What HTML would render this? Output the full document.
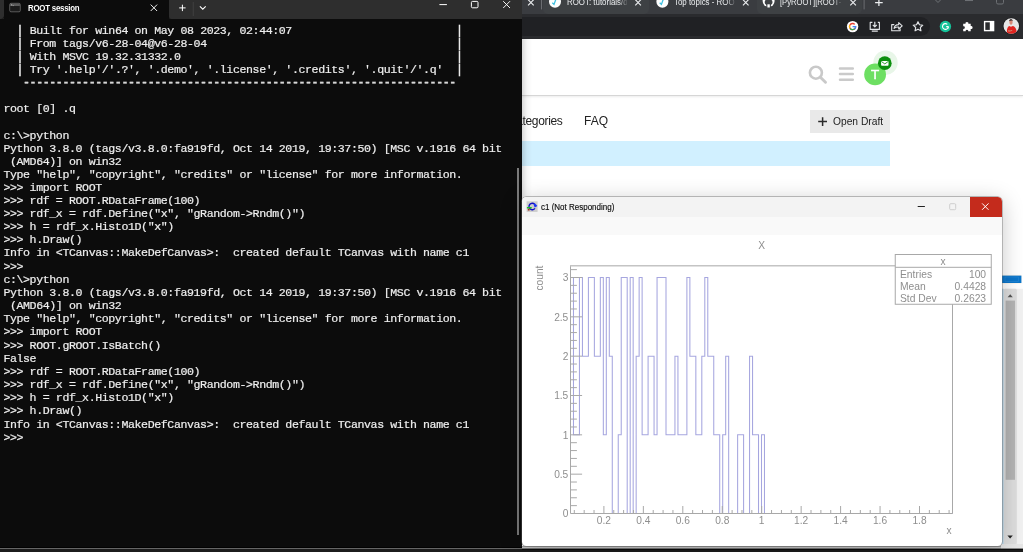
<!DOCTYPE html>
<html lang="en"><head><meta charset="utf-8"><title>ROOT session</title>
<style>
html,body{margin:0;padding:0;}
body{width:1023px;height:552px;overflow:hidden;position:relative;background:#fff;font-family:"Liberation Sans",Arial,sans-serif;}
.abs{position:absolute;}
body>*{will-change:transform;}
/* ---------- terminal ---------- */
#term{position:absolute;left:0;top:0;width:521.6px;height:552px;background:#0c0c0c;overflow:hidden;}
#term .tbar{position:absolute;left:0;top:0;width:522px;height:18.5px;background:#2e2e2e;}
#term .tab{position:absolute;left:3.75px;top:-4px;width:164.75px;height:23px;background:#0c0c0c;border-radius:4px 4px 0 0;}
#term .ttl{position:absolute;left:28px;top:2.5px;font-size:8.6px;font-weight:bold;color:#fff;letter-spacing:-0.25px;white-space:nowrap;transform:scaleX(0.915);transform-origin:0 0;}
#term .lines{position:absolute;left:0;top:0;width:522px;height:552px;will-change:transform;}
#term .lines div{position:absolute;left:3.4px;margin:0;font-family:"Liberation Mono","DejaVu Sans Mono",monospace;font-size:11.6px;letter-spacing:-0.4px;line-height:13px;height:13px;color:#efefef;white-space:pre;-webkit-text-stroke:0.2px #efefef;}
#term .sb{position:absolute;left:516.9px;top:167.7px;width:2.2px;height:367.2px;background:#7a7a7a;}
/* ---------- chrome ---------- */
#chrome{position:absolute;left:522px;top:0;width:501px;height:552px;background:#fff;overflow:hidden;}
#chrome .strip{position:absolute;left:0;top:0;width:501px;height:14px;background:#3a3c40;}
#chrome .tool{position:absolute;left:0;top:13.5px;width:501px;height:25px;background:#2a2b2e;}
#chrome .omni{position:absolute;left:-20px;top:16.5px;width:428px;height:19.2px;background:#202124;border-radius:0 9.6px 9.6px 0;}
.tabtxt{position:absolute;top:-2.7px;height:11px;font-size:8.4px;line-height:normal;color:#eceef0;white-space:nowrap;overflow:hidden;-webkit-mask-image:linear-gradient(90deg,#000 86%,transparent 102%);mask-image:linear-gradient(90deg,#000 86%,transparent 102%);}
.tabtxt span{display:inline-block;transform-origin:0 0;}
/* page */
#hdr{position:absolute;left:0;top:38.5px;width:501px;height:56.3px;background:#fff;border-bottom:1.5px solid #d6d6d6;box-shadow:0 1px 2px rgba(0,0,0,.08);}
.nav{position:absolute;font-size:12px;color:#222;white-space:nowrap;}
#draft{position:absolute;left:288px;top:110px;width:80px;height:22.85px;background:#e9e9e9;}
#draft span{position:absolute;left:22.7px;top:5.1px;font-size:11px;line-height:13px;color:#222;white-space:nowrap;transform:scaleX(0.931);transform-origin:0 0;}
#bluebar{position:absolute;left:0;top:141px;width:368px;height:24.5px;background:#d1f0ff;}
/* c1 window */
#c1{position:absolute;left:522px;top:197px;width:480px;height:348.5px;background:#fff;border-radius:4.5px;box-shadow:0 0 0 0.7px rgba(100,100,100,.55),0 4px 22px rgba(0,0,0,.23);overflow:hidden;}
#c1 .t{position:absolute;left:0;top:0;width:480px;height:19.6px;background:#f3f3f3;}
#c1 .m{position:absolute;left:0;top:19.6px;width:480px;height:18.3px;background:#f9f9f9;}
#c1 .cl{position:absolute;left:448px;top:0;width:32px;height:19.6px;background:#c42b1c;}
#c1 .ttl{position:absolute;left:18.9px;top:5.1px;font-size:8.4px;line-height:10px;color:#0d0d0d;white-space:nowrap;transform:scaleX(0.955);transform-origin:0 0;-webkit-text-stroke:0.15px #0d0d0d;}
svg.plot{position:absolute;left:0;top:0;}
/* right scrollbar */
#rs{position:absolute;left:1001px;top:270px;width:23px;height:280px;}
#bottom{position:absolute;left:0;top:544px;}
#term .lines div.dash{font-weight:bold;-webkit-text-stroke:0.3px #d8d8d8;color:#d8d8d8;}
#term .lines span.p{display:inline-block;transform:scaleY(1.17);transform-origin:50% 88%;-webkit-text-stroke:0.45px #efefef;}

</style></head>
<body>
<div id="chrome">
  <div class="strip"></div>
  <div class="tool"></div>
  <div class="omni"></div>
  <!-- tabs -->
  <div class="abs" style="left:21px;top:-6px;width:105.600px;height:20px;background:#3e4144;border-radius:0 0 5px 5px;"></div>
  <div class="abs" style="left:234.750px;top:-6px;width:105.600px;height:20px;background:#3e4144;border-radius:0 0 5px 5px;"></div>
  <svg class="abs" style="left:0;top:0" width="501" height="40" viewBox="0 0 501 40">
    <path d="M19.500,0v9.400M342.100,0v9.400" stroke="#707377" stroke-width="0.900" fill="none"/>
    <g stroke="#eceef0" stroke-width="1.150" fill="none">
      <path d="M6.100,-0.300l5.600,5.600m0,-5.600l-5.600,5.600"/>
      <path d="M113.300,-0.300l5.600,5.600m0,-5.600l-5.600,5.600"/>
      <path d="M220.950,-0.300l5.600,5.600m0,-5.600l-5.600,5.600"/>
      <path d="M328.300,-0.300l5.600,5.600m0,-5.600l-5.600,5.600"/>
      <path d="M356.900,-2v8M353.100,2.500h7.600" stroke-width="1.250"/>
    </g>
    <!-- window controls (cut off) -->
    <g stroke="#6d7074" stroke-width="1" fill="none">
      <path d="M413,-0.500l3,3l3,-3"/>
      <path d="M443,0.400h8" stroke-width="1.300"/>
      <rect x="474.500" y="-5" width="7" height="9" rx="1.500"/>
    </g>
    <!-- favicons -->
    <circle cx="33" cy="1.750" r="6" fill="#fff"/>
    <path d="M30.300,2.800l1.700,1.600l2.400,-6.500" stroke="#3fc0e0" stroke-width="1.300" fill="none"/>
    <circle cx="140.400" cy="1.750" r="6" fill="#fff"/>
    <path d="M137.700,2.800l1.700,1.600l2.400,-6.500" stroke="#3fc0e0" stroke-width="1.300" fill="none"/>
    <circle cx="246.600" cy="1" r="6" fill="#fff"/>
    <path d="M244.300,7.500v-2.600c-1.600,-0.700 -2,-2.500 -1.200,-4.300c1.500,-1.800 5.500,-1.800 7,0c0.800,1.800 0.400,3.600 -1.200,4.300v2.600z" fill="#3e4144"/>
    <path d="M245.400,7.500v-3.200h2.400v3.200z" fill="#fff"/>
    <!-- toolbar icons -->
    <circle cx="330.600" cy="26.600" r="5.700" fill="#fff"/>
    <path d="M333.700,26.600a3.100,3.100 0 1 1 -0.900,-2.200" stroke="#ea4335" stroke-width="1.300" fill="none"/>
    <path d="M327.800,25.300a3.100,3.100 0 0 0 0,2.600" stroke="#fbbc05" stroke-width="1.300" fill="none"/>
    <path d="M328.200,28.500a3.100,3.100 0 0 0 4.500,0.300" stroke="#34a853" stroke-width="1.300" fill="none"/>
    <path d="M330.600,26.600h3.100a3.100,3.100 0 0 1 -1,2.300" stroke="#4285f4" stroke-width="1.300" fill="none"/>
    <g stroke="#e3e5e8" stroke-width="1.100" fill="none" stroke-linejoin="round">
      <!-- install -->
      <path d="M350.400,22.400h-2.200v7h9.200v-7h-1.600M349.800,31.100h6"/>
      <path d="M352.800,21.800v4.800M350.800,24.900l2,2l2,-2" stroke-width="1.200"/>
      <!-- share -->
      <path d="M372.300,24.600h-2.600v6.200h8.400v-2.200"/>
      <path d="M372.100,28.300c0.300,-2.300 1.800,-3.600 4.600,-3.700v-2l3.500,3.200l-3.500,3.200v-2c-2,-0.100 -3.500,0.300 -4.600,1.300z"/>
      <!-- star -->
      <path d="M396,21.700l1.450,3.100l3.350,0.400l-2.500,2.300l0.650,3.300l-2.950,-1.650l-2.950,1.650l0.650,-3.300l-2.500,-2.300l3.350,-0.400z" stroke-width="1.150"/>
    </g>
    <!-- grammarly -->
    <circle cx="423.400" cy="26.500" r="5.700" fill="#15c39a"/>
    <path d="M426.300,26.700a2.900,2.900 0 1 1 -1,-2.400M426.500,26.600h-2.300M426.300,26.600v2" stroke="#fff" stroke-width="1.100" fill="none"/>
    <!-- puzzle -->
    <path d="M441.200,23.800h2.300a1.500,1.500 0 1 1 2.900,0h2.300v2.300a1.500,1.500 0 1 1 0,2.900v2.300h-2.500a1.300,1.300 0 1 0 -2.500,0h-2.500v-2.500a1.300,1.300 0 1 0 0,-2.500z" fill="#fff"/>
    <!-- side panel -->
    <rect x="462.600" y="21.600" width="9" height="9" fill="none" stroke="#fff" stroke-width="1.400"/>
    <path d="M467.800,21.600h3.800v9h-3.800z" fill="#fff"/>
    <!-- avatar -->
    <circle cx="489.300" cy="26" r="8.600" fill="#1c1c1f"/>
    <circle cx="489.300" cy="26" r="7.800" fill="#e6e6e6"/>
    <clipPath id="avc"><circle cx="489.300" cy="26" r="7.800"/></clipPath>
    <g clip-path="url(#avc)">
      <path d="M485,35c-0.600,-5.500 0.300,-8.400 2.200,-9.100l1.800,0.900l1.800,-0.900c2.600,0.700 4.300,3.200 3.900,9.100z" fill="#e02420"/>
      <path d="M487.400,21.800c0,-2.600 3.200,-2.600 3.200,0c0,1.700 -0.600,3 -1.600,3c-1,0 -1.600,-1.300 -1.600,-3z" fill="#d98a78"/>
      <path d="M487.200,21.200c-0.200,-2.400 3.600,-2.400 3.600,-0.200c-1,-0.700 -2.500,-0.600 -3.600,0.200z" fill="#2a2020"/>
      <path d="M486,30.200c1.200,0.500 2.600,0.300 4,-0.300l0.300,0.900c-1.400,0.700 -3,0.900 -4.300,0.400z" fill="#c99a7e"/>
    </g>
  </svg>
  <div class="tabtxt" style="left:44.900px;width:60.600px;"><span style="transform:scaleX(0.943)">ROOT: tutorials/d</span></div>
  <div class="tabtxt" style="left:152.250px;width:60.500px;"><span style="transform:scaleX(0.943)">Top topics - ROO</span></div>
  <div class="tabtxt" style="left:258.400px;width:62px;"><span style="transform:scaleX(0.910)">[PyROOT][ROOT-</span></div>
  <!-- page -->
  <div id="hdr"></div>
  <svg class="abs" style="left:0;top:38px" width="501" height="130" viewBox="522 38 501 130">
    <!-- search -->
    <circle cx="815.900" cy="72.700" r="6" fill="none" stroke="#c9c9c9" stroke-width="2.600"/>
    <path d="M820.600,77.500l4.900,4.800" stroke="#c9c9c9" stroke-width="2.900" stroke-linecap="round"/>
    <!-- hamburger -->
    <path d="M840,68.400h12.800M840,74.100h12.800M840,79.800h12.800" stroke="#cacaca" stroke-width="2.500" stroke-linecap="round"/>
    <!-- halo + avatar + bubble -->
    <circle cx="885.500" cy="62.700" r="12.200" fill="#e8f6e8"/>
    <circle cx="875.100" cy="74.400" r="10.900" fill="#6ddf62"/>
    <text x="875.100" y="79.100" font-size="13.400" fill="#fff" stroke="#fff" stroke-width="0.450" text-anchor="middle" font-family="Liberation Sans, Arial, sans-serif">T</text>
    <circle cx="884.800" cy="63.200" r="6.850" fill="#0c8f0e"/>
    <rect x="881.100" y="60.900" width="7.400" height="4.800" rx="0.800" fill="#fff"/>
    <path d="M881.400,61.500l3.400,2.400l3.400,-2.400" stroke="#0c8f0e" stroke-width="0.850" fill="none"/>
  </svg>
  <div class="nav" style="left:-5.800px;top:114px;letter-spacing:-0.35px;">ategories</div>
  <div class="nav" style="left:62px;top:114px;">FAQ</div>
  <div id="bluebar"></div>
  <div class="abs" style="left:0;top:38px;width:10px;height:514px;background:linear-gradient(90deg,rgba(0,0,0,.15),rgba(0,0,0,.04) 50%,rgba(0,0,0,0));"></div>
  <div id="draft"><svg class="abs" style="left:0;top:0" width="80" height="23" viewBox="810 110 80 23"><path d="M822.600,117.200v8.800M818.200,121.600h8.800" stroke="#2a2a2a" stroke-width="1.500"/></svg><span>Open Draft</span></div>
</div>
<div id="rs">
  <svg class="abs" style="left:0;top:0" width="23" height="280" viewBox="1001 270 23 280">
    <rect x="1001" y="270" width="23" height="280" fill="#fff"/>
    <rect x="1002" y="274.800" width="19.400" height="9" fill="#fdf6ea"/>
    <rect x="1002" y="275.600" width="19.400" height="7.400" fill="#0b76cb"/>
    <rect x="1005" y="277" width="13.500" height="4.600" fill="none" stroke="#2a88d6" stroke-width="0.600"/>
    <rect x="1001" y="288.800" width="23" height="256" fill="#f1f1f1"/>
    <rect x="1001.800" y="288.800" width="2" height="256" fill="#b9d8ec"/>
    <rect x="1003.800" y="288.800" width="13" height="255.700" rx="1.500" fill="#dedede"/>
    <rect x="1005.600" y="300.600" width="9.400" height="179.200" fill="#b4b4b4"/>
    <path d="M1007.600,297.200l2.600,-3l2.600,3z" fill="#555"/>
    <path d="M1007.400,535.600l2.700,3l2.700,-3z" fill="#222"/>
  </svg>
</div>
<div id="term">
  <div class="tbar"></div>
  <div class="tab"></div>
  <div class="ttl">ROOT session</div>
  <svg class="abs" style="left:0;top:0" width="522" height="20" viewBox="0 0 522 20">
    <!-- inverse corners next to the tab -->
    <path d="M0,18.500H3.750V15.500A3,3 0 0 1 0.750,18.500Z" fill="#0c0c0c"/>
    <path d="M168.500,15.500V18.500H171.500A3,3 0 0 1 168.500,15.500Z" fill="#0c0c0c"/>
    <!-- terminal icon -->
    <rect x="9.700" y="3.300" width="10.600" height="8.500" rx="1.300" fill="#1b1b1b" stroke="#6a6a6a" stroke-width="0.800"/>
    <path d="M10.100,3.700h9.800v2.300h-9.800z" fill="#5c5c5c"/>
    <path d="M11.200,4.300l0.900,0.600l-0.900,0.600M12.600,5.600h1.200" stroke="#ddd" stroke-width="0.450" fill="none"/>
    <g stroke="#fff" fill="none" stroke-width="1">
      <path d="M150.700,4.600l6.400,6.400m0,-6.400l-6.400,6.400" stroke-width="0.950"/>
      <path d="M182.400,4.700v6.400M179.200,7.900h6.400"/>
      <path d="M199.900,6.300l2.900,2.900l2.900,-2.900" stroke-width="1.050"/>
      <path d="M439.400,4.600h7.500"/>
      <rect x="471.400" y="1.400" width="6.600" height="6.400" rx="1.100"/>
      <path d="M503.200,1.200l6.800,6.800m0,-6.800l-6.800,6.800" stroke-width="0.950"/>
    </g>
    <path d="M193.250,2v14" stroke="#454545" stroke-width="0.800"/>
  </svg>
  <div class="lines">
<div style="top:24.00px">  <span class="p">|</span> Built for win64 on May 08 2023, 02:44:07                         <span class="p">|</span></div>
<div style="top:37.00px">  <span class="p">|</span> From tags/v6-28-04@v6-28-04                                      <span class="p">|</span></div>
<div style="top:50.00px">  <span class="p">|</span> With MSVC 19.32.31332.0                                          <span class="p">|</span></div>
<div style="top:63.00px">  <span class="p">|</span> Try '.help'/'.?', '.demo', '.license', '.credits', '.quit'/'.q'  <span class="p">|</span></div>
<div class="dash" style="top:75.40px">   ------------------------------------------------------------------</div>
<div style="top:102.00px">root [0] .q</div>
<div style="top:129.00px">c:\&gt;python</div>
<div style="top:142.00px">Python 3.8.0 (tags/v3.8.0:fa919fd, Oct 14 2019, 19:37:50) [MSC v.1916 64 bit</div>
<div style="top:155.00px"> (AMD64)] on win32</div>
<div style="top:168.00px">Type "help", "copyright", "credits" or "license" for more information.</div>
<div style="top:181.00px">&gt;&gt;&gt; import ROOT</div>
<div style="top:194.00px">&gt;&gt;&gt; rdf = ROOT.RDataFrame(100)</div>
<div style="top:207.00px">&gt;&gt;&gt; rdf_x = rdf.Define("x", "gRandom-&gt;Rndm()")</div>
<div style="top:220.00px">&gt;&gt;&gt; h = rdf_x.Histo1D("x")</div>
<div style="top:233.00px">&gt;&gt;&gt; h.Draw()</div>
<div style="top:246.00px">Info in &lt;TCanvas::MakeDefCanvas&gt;:  created default TCanvas with name c1</div>
<div style="top:260.00px">&gt;&gt;&gt;</div>
<div style="top:273.00px">c:\&gt;python</div>
<div style="top:286.00px">Python 3.8.0 (tags/v3.8.0:fa919fd, Oct 14 2019, 19:37:50) [MSC v.1916 64 bit</div>
<div style="top:299.00px"> (AMD64)] on win32</div>
<div style="top:312.00px">Type "help", "copyright", "credits" or "license" for more information.</div>
<div style="top:325.00px">&gt;&gt;&gt; import ROOT</div>
<div style="top:339.00px">&gt;&gt;&gt; ROOT.gROOT.IsBatch()</div>
<div style="top:352.00px">False</div>
<div style="top:365.00px">&gt;&gt;&gt; rdf = ROOT.RDataFrame(100)</div>
<div style="top:378.00px">&gt;&gt;&gt; rdf_x = rdf.Define("x", "gRandom-&gt;Rndm()")</div>
<div style="top:391.00px">&gt;&gt;&gt; h = rdf_x.Histo1D("x")</div>
<div style="top:404.00px">&gt;&gt;&gt; h.Draw()</div>
<div style="top:418.00px">Info in &lt;TCanvas::MakeDefCanvas&gt;:  created default TCanvas with name c1</div>
<div style="top:431.00px">&gt;&gt;&gt;</div>
</div>
  <div class="sb"></div>
</div>
<svg id="bottom" width="1023" height="8" viewBox="0 544 1023 8" shape-rendering="crispEdges">
  <rect x="522" y="545" width="479" height="1" fill="#fff"/>
  <rect x="522" y="546" width="479" height="1" fill="#9c9c9c"/>
  <rect x="522" y="547" width="479" height="1" fill="#c6c6c6"/>
  <rect x="522" y="548" width="479" height="1" fill="#747474"/>
  <rect x="1001" y="544" width="22" height="4" fill="#e6e6e6"/>
  <rect x="1001" y="548" width="22" height="1" fill="#8a8a8a"/>
  <rect x="522" y="549" width="501" height="1" fill="#0a0a0a"/>
  <rect x="522" y="550" width="501" height="2" fill="#1c1c1c"/>
  <rect x="0" y="544" width="522" height="3" fill="#0c0c0c"/>
  <rect x="0" y="547" width="522" height="1" fill="#020202"/>
  <rect x="0" y="548" width="522" height="1" fill="#666"/>
  <rect x="0" y="549" width="522" height="3" fill="#1c1c1c"/>
</svg>
<div id="c1">
  <div class="t"></div>
  <div class="m"></div>
  <div class="cl"></div>
  <div class="ttl">c1 (Not Responding)</div>
  <svg class="abs" style="left:0;top:0" width="480" height="22" viewBox="522 197 480 22">
    <rect x="526.600" y="201.300" width="11" height="10.600" fill="#cdcdcd"/>
    <path d="M534.600,204.100a3.300,3.300 0 1 0 0.400,4.300" stroke="#1212c4" stroke-width="1.400" fill="none"/>
    <path d="M533.600,204.500l1.300,-1.300l2.500,2.900l-2.700,1.300z" fill="#1a34f4"/>
    <path d="M526.900,206.900h4.800v1.500h-4.800z" fill="#16c02c"/>
    <path d="M527.800,208.700h1.800v1.900h-1.800z" fill="#a82a14"/>
    <path d="M917.700,206.500h7.200" stroke="#222" stroke-width="1"/>
    <rect x="949.700" y="203.700" width="6" height="6" rx="1" fill="none" stroke="#c9c9c9" stroke-width="0.900"/>
    <path d="M982.100,203.400l6.400,6.400m0,-6.400l-6.400,6.400" stroke="#fff" stroke-width="1"/>
  </svg>
</div>
<svg class="plot" width="1023" height="552" viewBox="0 0 1023 552" font-family="Liberation Sans, Arial, sans-serif">
<path d="M570.50,277.50H573.48V434.83H576.47H579.45V277.50H582.44V356.17H585.42H588.41V277.50H591.39H594.38V356.17H597.36H600.34V277.50H603.33V434.83H606.31V277.50H609.30V356.17H612.28V513.50H615.27H618.25V434.83H621.23V277.50H624.22H627.20V513.50H630.19V277.50H633.17V513.50H636.16V356.17H639.14V277.50H642.12V434.83H645.11H648.09V356.17H651.08H654.06V434.83H657.05V277.50H660.03H663.02H666.00V434.83H668.98H671.97H674.95V356.17H677.94V434.83H680.92H683.91H686.89V277.50H689.88V356.17H692.86H695.84V434.83H698.83H701.81V356.17H704.80V277.50H707.78V356.17H710.77H713.75V434.83H716.73H719.72V513.50H722.70V434.83H725.69V356.17H728.67V513.50H731.66H734.64H737.62V434.83H740.61H743.59V513.50H746.58H749.56V356.17H752.55V434.83H755.53H758.52V513.50H761.50V434.83H764.48V513.50H767.47H770.45H773.44H776.42H779.41H782.39H785.38H788.36H791.34H794.33H797.31H800.30H803.28H806.27H809.25H812.23H815.22H818.20H821.19H824.17H827.16H830.14H833.12H836.11H839.09H842.08H845.06H848.05H851.03H854.02H857.00H859.98H862.97H865.95H868.94H871.92H874.91H877.89H880.88H883.86H886.84H889.83H892.81H895.80H898.78H901.77H904.75H907.73H910.72H913.70H916.69H919.67H922.66H925.64H928.62H931.61H934.59H937.58H940.56H943.55H946.53H949.52H952.50" fill="none" stroke="#a6a6df" stroke-width="1.05"/>
<path d="M570.5,265.75V513.5H952.5V265.75" fill="none" stroke="#a8a8a8" stroke-width="1"/>
<path d="M570.0,265.65H953.0" fill="none" stroke="#c4c4c4" stroke-width="1.5"/>
<path d="M574.31,513.5v-3.5M584.18,513.5v-3.5M594.04,513.5v-3.5M603.90,513.5v-7.5M613.76,513.5v-3.5M623.62,513.5v-3.5M633.49,513.5v-3.5M643.35,513.5v-7.5M653.21,513.5v-3.5M663.08,513.5v-3.5M672.94,513.5v-3.5M682.80,513.5v-7.5M692.66,513.5v-3.5M702.53,513.5v-3.5M712.39,513.5v-3.5M722.25,513.5v-7.5M732.11,513.5v-3.5M741.98,513.5v-3.5M751.84,513.5v-3.5M761.70,513.5v-7.5M771.56,513.5v-3.5M781.43,513.5v-3.5M791.29,513.5v-3.5M801.15,513.5v-7.5M811.01,513.5v-3.5M820.88,513.5v-3.5M830.74,513.5v-3.5M840.60,513.5v-7.5M850.46,513.5v-3.5M860.33,513.5v-3.5M870.19,513.5v-3.5M880.05,513.5v-7.5M889.91,513.5v-3.5M899.78,513.5v-3.5M909.64,513.5v-3.5M919.50,513.5v-7.5M929.36,513.5v-3.5M939.23,513.5v-3.5M949.09,513.5v-3.5M570.5,505.63h6.4M570.5,497.77h6.4M570.5,489.90h6.4M570.5,482.03h6.4M570.5,474.17h11.6M570.5,466.30h6.4M570.5,458.43h6.4M570.5,450.57h6.4M570.5,442.70h6.4M570.5,434.83h11.6M570.5,426.97h6.4M570.5,419.10h6.4M570.5,411.23h6.4M570.5,403.37h6.4M570.5,395.50h11.6M570.5,387.63h6.4M570.5,379.77h6.4M570.5,371.90h6.4M570.5,364.03h6.4M570.5,356.17h11.6M570.5,348.30h6.4M570.5,340.43h6.4M570.5,332.57h6.4M570.5,324.70h6.4M570.5,316.83h11.6M570.5,308.97h6.4M570.5,301.10h6.4M570.5,293.23h6.4M570.5,285.37h6.4M570.5,277.50h11.6M570.5,269.63h6.4" fill="none" stroke="#a8a8a8" stroke-width="1"/>
<text x="603.90" y="524" font-size="10.2" fill="#8e8e8e" text-anchor="middle">0.2</text>
<text x="643.35" y="524" font-size="10.2" fill="#8e8e8e" text-anchor="middle">0.4</text>
<text x="682.80" y="524" font-size="10.2" fill="#8e8e8e" text-anchor="middle">0.6</text>
<text x="722.25" y="524" font-size="10.2" fill="#8e8e8e" text-anchor="middle">0.8</text>
<text x="761.70" y="524" font-size="10.2" fill="#8e8e8e" text-anchor="middle">1</text>
<text x="801.15" y="524" font-size="10.2" fill="#8e8e8e" text-anchor="middle">1.2</text>
<text x="840.60" y="524" font-size="10.2" fill="#8e8e8e" text-anchor="middle">1.4</text>
<text x="880.05" y="524" font-size="10.2" fill="#8e8e8e" text-anchor="middle">1.6</text>
<text x="919.50" y="524" font-size="10.2" fill="#8e8e8e" text-anchor="middle">1.8</text>
<text x="568.3" y="517.20" font-size="10.2" fill="#8e8e8e" text-anchor="end">0</text>
<text x="568.3" y="477.87" font-size="10.2" fill="#8e8e8e" text-anchor="end">0.5</text>
<text x="568.3" y="438.53" font-size="10.2" fill="#8e8e8e" text-anchor="end">1</text>
<text x="568.3" y="399.20" font-size="10.2" fill="#8e8e8e" text-anchor="end">1.5</text>
<text x="568.3" y="359.87" font-size="10.2" fill="#8e8e8e" text-anchor="end">2</text>
<text x="568.3" y="320.53" font-size="10.2" fill="#8e8e8e" text-anchor="end">2.5</text>
<text x="568.3" y="281.20" font-size="10.2" fill="#8e8e8e" text-anchor="end">3</text>
<text x="949" y="534.3" font-size="10.2" fill="#8e8e8e" text-anchor="middle">x</text>
<text transform="translate(543,290.5) rotate(-90)" font-size="10.2" fill="#8e8e8e">count</text>
<text x="761.6" y="248.6" font-size="10.2" fill="#8e8e8e" text-anchor="middle">X</text>
<rect x="895.25" y="254.5" width="96" height="49.75" fill="#fff" stroke="#a8a8a8" stroke-width="1"/>
<path d="M895.25,267.3H991.25" stroke="#a8a8a8" stroke-width="1"/>
<text x="943" y="264.7" font-size="10.2" fill="#8e8e8e" text-anchor="middle">x</text>
<text x="900" y="278" font-size="10.3" fill="#8e8e8e">Entries</text>
<text x="986.1" y="278" font-size="10.3" fill="#8e8e8e" text-anchor="end">100</text>
<text x="900" y="289.6" font-size="10.3" fill="#8e8e8e">Mean</text>
<text x="986.1" y="289.6" font-size="10.3" fill="#8e8e8e" text-anchor="end">0.4428</text>
<text x="900" y="302.1" font-size="10.3" fill="#8e8e8e">Std Dev</text>
<text x="986.1" y="302.1" font-size="10.3" fill="#8e8e8e" text-anchor="end">0.2623</text>
</svg>

</body></html>
